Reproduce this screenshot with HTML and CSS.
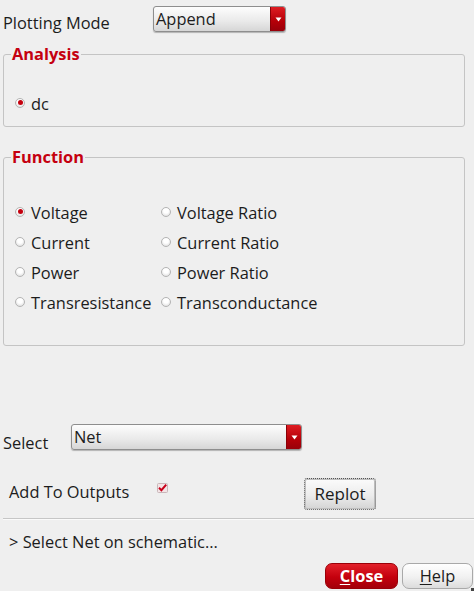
FILE: index.html
```html
<!DOCTYPE html>
<html>
<head>
<meta charset="utf-8">
<link rel="stylesheet" href="styles.css">
</head>
<body>
<div class="dialog">
  <div class="mode-row">
    <span class="mode-label">Plotting Mode</span>
    <div class="combo combo-mode">
      <span class="combo-text">Append</span>
      <span class="combo-arrow"><svg width="7" height="5" viewBox="0 0 7 5"><path d="M0.5 0.5 L6.5 0.5 L3.5 4.5 Z" fill="#fff"/></svg></span>
    </div>
  </div>

  <fieldset class="group group-analysis">
    <legend class="group-title">Analysis</legend>
    <div class="radio-list">
      <label class="radio checked"><span class="radio-mark"></span><span>dc</span></label>
    </div>
  </fieldset>

  <fieldset class="group group-function">
    <legend class="group-title">Function</legend>
    <div class="radio-grid">
      <label class="radio checked"><span class="radio-mark"></span><span>Voltage</span></label>
      <label class="radio"><span class="radio-mark"></span><span>Voltage Ratio</span></label>
      <label class="radio"><span class="radio-mark"></span><span>Current</span></label>
      <label class="radio"><span class="radio-mark"></span><span>Current Ratio</span></label>
      <label class="radio"><span class="radio-mark"></span><span>Power</span></label>
      <label class="radio"><span class="radio-mark"></span><span>Power Ratio</span></label>
      <label class="radio"><span class="radio-mark"></span><span>Transresistance</span></label>
      <label class="radio"><span class="radio-mark"></span><span>Transconductance</span></label>
    </div>
  </fieldset>

  <div class="select-row">
    <span class="select-label">Select</span>
    <div class="combo combo-net">
      <span class="combo-text">Net</span>
      <span class="combo-arrow"><svg width="7" height="5" viewBox="0 0 7 5"><path d="M0.5 0.5 L6.5 0.5 L3.5 4.5 Z" fill="#fff"/></svg></span>
    </div>
  </div>

  <div class="outputs-row">
    <span class="outputs-label">Add To Outputs</span>
    <span class="check"><svg width="11" height="10" viewBox="0 0 11 10"><rect x="0.5" y="0.5" width="10" height="9" rx="1" fill="#f3e4e6" stroke="#c9b6b9"/><path d="M2 4.8 L4.4 7.2 L9.2 1.6" fill="none" stroke="#c8001a" stroke-width="2"/></svg></span>
    <button class="btn-replot">Replot</button>
  </div>

  <div class="separator"></div>

  <div class="status">&gt; Select Net on schematic...</div>

  <div class="buttons">
    <button class="btn btn-close"><u>C</u>lose</button>
    <button class="btn btn-help"><u>H</u>elp</button>
  </div>
  <span class="grip"></span>
</div>
</body>
</html>
```
FILE: styles.css
```css
html, body {
  margin: 0;
  padding: 0;
}
body {
  background: #efefef;
  font-family: "Open Sans", "Noto Sans", sans-serif;
  font-size: 16.4px;
  color: #1c1c1c;
  width: 474px;
  height: 591px;
  overflow: hidden;
}
.dialog {
  position: relative;
  width: 474px;
  height: 591px;
}

/* Plotting mode row */
.mode-row {
  display: flex;
  align-items: flex-start;
  padding-top: 6px;
  height: 26px;
}
.mode-label {
  width: 150px;
  padding-left: 3px;
  line-height: 23px;
  padding-top: 5px;
}

/* combo box */
.combo {
  display: flex;
  height: 24px;
  border: 1px solid #8e8e8e;
  border-radius: 3px;
  background: linear-gradient(#fdfdfd, #e9e9e9 60%, #d6d6d6);
  box-shadow: 0 1px 1px rgba(0,0,0,0.25);
  overflow: hidden;
}
.combo-text {
  flex: 1;
  padding-left: 2px;
  line-height: 23px;
}
.combo-arrow {
  width: 14px;
  display: flex;
  align-items: center;
  justify-content: center;
  background: linear-gradient(#de1c22, #b50008 60%, #98000a);
  border-left: 1px solid #8a0006;
}
.combo-mode {
  width: 131px;
}
.combo-net {
  width: 229px;
}

/* group boxes */
.group {
  margin: 0 9px 0 3px;
  border: 1px solid #c4c4c4;
  border-radius: 3px;
  min-width: 0;
}
.group-title {
  margin-left: -4px;
  padding: 0 1px;
  font-weight: bold;
  color: #c5000f;
  line-height: 20px;
}
.group-analysis {
  margin-top: 12px;
  padding: 24px 0 8px 11px;
}
.group-function {
  margin-top: 20px;
  padding: 30px 0 28px 11px;
}
.radio-grid {
  display: grid;
  grid-template-columns: 146px auto;
}
.radio {
  display: flex;
  align-items: center;
  gap: 6px;
  height: 30px;
  white-space: nowrap;
}
.radio-mark {
  width: 8px;
  height: 8px;
  border: 1px solid #b4b4b4;
  border-radius: 50%;
  background: radial-gradient(circle at 50% 35%, #ffffff 35%, #d6d6d6 100%);
  display: flex;
  align-items: center;
  justify-content: center;
  flex: none;
  margin-top: -1px;
}
.radio.checked .radio-mark::after {
  content: "";
  width: 5px;
  height: 5px;
  border-radius: 50%;
  background: #c4000e;
}

/* select row */
.select-row {
  display: flex;
  align-items: flex-start;
  margin-top: 78px;
  height: 26px;
}
.select-label {
  width: 68px;
  padding-left: 3px;
  line-height: 23px;
  padding-top: 7px;
}

/* outputs row */
.outputs-row {
  display: flex;
  align-items: flex-start;
  margin-top: 28px;
  height: 32px;
}
.outputs-label {
  padding-left: 9px;
  width: 139px;
  line-height: 23px;
  padding-top: 2px;
}
.check {
  display: block;
  width: 11px;
  height: 10px;
  margin-top: 5px;
  margin-left: 9px;
}
.check svg {
  display: block;
}
.btn-replot {
  margin-left: 136px;
  width: 72px;
  height: 32px;
  padding: 0;
  font-family: inherit;
  font-size: 17px;
  color: #1c1c1c;
  border: 1px dotted #555;
  border-radius: 3px;
  background: linear-gradient(#fbfbfb, #ececec 55%, #d4d4d4);
  box-shadow: inset 0 0 0 1px #bdbdbd;
  line-height: 28px;
}

/* separator */
.separator {
  margin: 8px 0 0 3px;
  height: 1px;
  background: #c6c6c6;
  border-bottom: 1px solid #fafafa;
}

/* status */
.status {
  padding-left: 9px;
  margin-top: 10px;
  line-height: 23px;
}

/* bottom buttons */
.buttons {
  display: flex;
  justify-content: flex-end;
  gap: 4px;
  margin-top: 10px;
  padding-right: 1px;
}
.btn {
  height: 26px;
  width: 73px;
  padding: 0;
  font-family: inherit;
  font-size: 16.4px;
  border-radius: 7px;
  line-height: 22px;
}
.btn u {
  text-decoration-thickness: 1px;
  text-underline-offset: 2px;
}
.btn-close {
  color: #ffffff;
  font-weight: bold;
  border: 1px solid #9a0008;
  background: linear-gradient(#e2212a, #c4000d 55%, #a3000a);
}
.btn-help {
  width: 71px;
  color: #1c1c1c;
  border: 1px solid #a9a9a9;
  background: linear-gradient(#ffffff, #f1f1f1 55%, #dcdcdc);
}
.grip {
  position: absolute;
  right: 0;
  bottom: 0;
  width: 3px;
  height: 3px;
  background: #444;
}
```
